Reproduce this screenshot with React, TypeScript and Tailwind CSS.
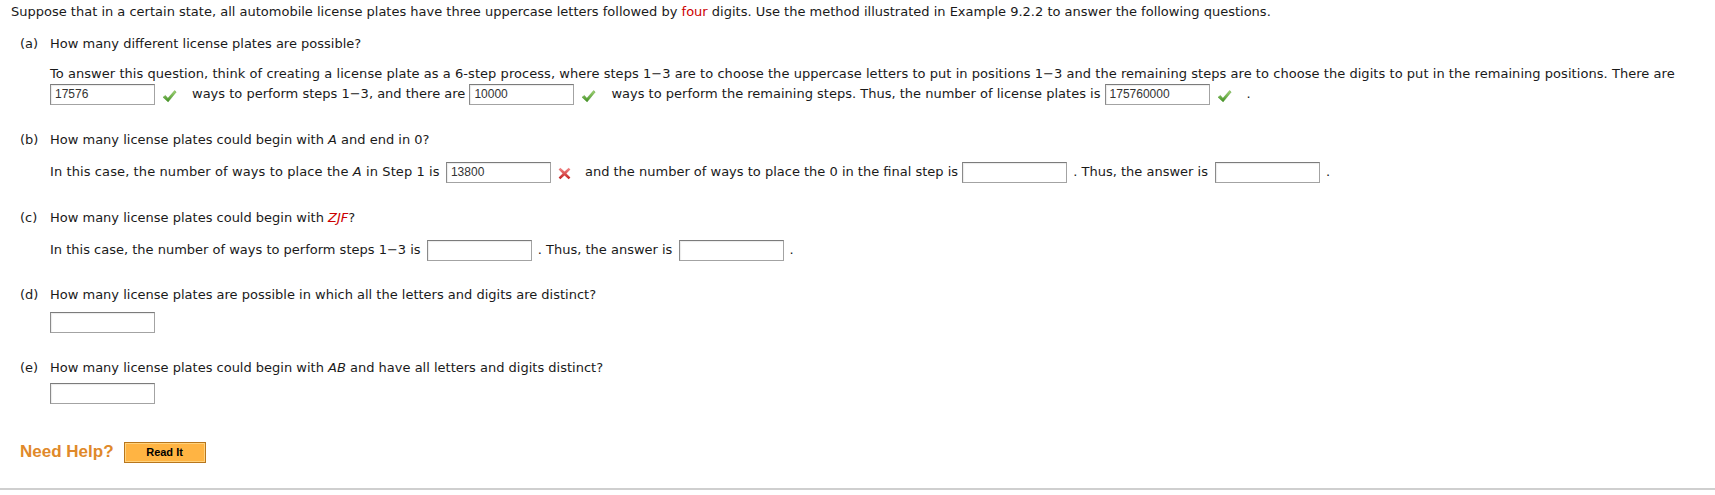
import React from "react";

const Box = ({ value }: { value?: string }) => (
  <span className="inline-block align-middle shrink-0 w-[105px] h-[21px] border border-[#a3a3a3] border-t-[#7b7b7b] border-l-[#8a8a8a] bg-white pl-[4px] text-[12px] leading-[19px] text-[#333] [font-family:'Liberation_Sans',Arial,sans-serif] shadow-[inset_1px_1px_1px_rgba(0,0,0,0.08)]">
    {value}
  </span>
);

const Check = () => (
  <svg width="15" height="14" viewBox="0 0 15 14" className="inline-block align-middle shrink-0 ml-[7px] mr-[15px] mt-[3px]">
    <defs>
      <linearGradient id="cg" x1="0" y1="0" x2="0" y2="1">
        <stop offset="0" stopColor="#a6d877" />
        <stop offset="1" stopColor="#3f8f22" />
      </linearGradient>
    </defs>
    <path d="M1 8.2 L3.4 6.4 L5.9 9.2 L12.6 1.6 L14.2 3 L6.1 13 Z" fill="url(#cg)" stroke="#4a8f2a" strokeWidth="0.4" />
  </svg>
);

const Cross = () => (
  <svg width="13" height="13" viewBox="0 0 13 13" className="inline-block align-middle shrink-0 ml-[7px] mr-[14px] mt-[3px]">
    <defs>
      <linearGradient id="xg" x1="0" y1="0" x2="0" y2="1">
        <stop offset="0" stopColor="#f28a8a" />
        <stop offset="1" stopColor="#c41f1f" />
      </linearGradient>
    </defs>
    <path d="M2.3 0.8 L6.5 4.4 L10.7 0.8 L12.4 2.6 L8.4 6.5 L12.4 10.4 L10.7 12.2 L6.5 8.6 L2.3 12.2 L0.6 10.4 L4.6 6.5 L0.6 2.6 Z" fill="url(#xg)" />
  </svg>
);

const Head = ({ label, children, mt }: { label: string; children: React.ReactNode; mt: string }) => (
  <div className={`flex pl-[9px] h-[20px] leading-[20px] whitespace-nowrap ${mt}`}>
    <span className="w-[30px]">{label}</span>
    <span>{children}</span>
  </div>
);

export default function App() {
  return (
    <div className="w-[1715px] h-[495px] bg-white text-[#1a1a1a] text-[13px] [font-family:'DejaVu_Sans',Verdana,sans-serif] overflow-hidden">
      <div className="pl-[11px] pt-[2px]">
        <div className="h-[20px] leading-[20px] whitespace-nowrap">
          Suppose that in a certain state, all automobile license plates have three uppercase letters followed by{" "}
          <span className="text-[#cc0000]">four</span> digits. Use the method illustrated in Example 9.2.2 to answer the following questions.
        </div>

        <Head label="(a)" mt="mt-[12px]">How many different license plates are possible?</Head>
        <div className="pl-[39px] mt-[10px] leading-[20px] whitespace-nowrap">
          <div className="h-[20px] tracking-[0.05px]">
            To answer this question, think of creating a license plate as a 6-step process, where steps 1−3 are to choose the uppercase letters to put in positions 1−3 and the remaining steps are to choose the digits to put in the remaining positions. There are
          </div>
          <div className="h-[20px] flex items-center">
            <Box value="17576" />
            <Check />
            <span>ways to perform steps 1−3, and there are&nbsp;</span>
            <Box value="10000" />
            <Check />
            <span>ways to perform the remaining steps. Thus, the number of license plates is&nbsp;</span>
            <Box value="175760000" />
            <Check />
            <span>.</span>
          </div>
        </div>

        <Head label="(b)" mt="mt-[26px]">
          How many license plates could begin with <i>A</i> and end in 0?
        </Head>
        <div className="pl-[39px] mt-[12px] h-[20px] flex items-center whitespace-nowrap">
          <span className="tracking-[0.1px] mr-[2px]">
            In this case, the number of ways to place the <i>A</i> in Step 1 is&nbsp;
          </span>
          <Box value="13800" />
          <Cross />
          <span>and the number of ways to place the 0 in the final step is&nbsp;</span>
          <Box />
          <span className="ml-[6px] mr-[3px]">. Thus, the answer is&nbsp;</span>
          <Box />
          <span className="ml-[6px]">.</span>
        </div>

        <Head label="(c)" mt="mt-[26px]">
          How many license plates could begin with <i className="text-[#cc0000]">ZJF</i>?
        </Head>
        <div className="pl-[39px] mt-[12px] h-[20px] flex items-center whitespace-nowrap">
          <span className="mr-[2px]">In this case, the number of ways to perform steps 1−3 is&nbsp;</span>
          <Box />
          <span className="ml-[6px] mr-[2px]">. Thus, the answer is&nbsp;</span>
          <Box />
          <span className="ml-[6px]">.</span>
        </div>

        <Head label="(d)" mt="mt-[25px]">How many license plates are possible in which all the letters and digits are distinct?</Head>
        <div className="pl-[39px] mt-[7px] h-[20px] flex items-center">
          <Box />
        </div>

        <Head label="(e)" mt="mt-[26px]">
          How many license plates could begin with <i>AB</i> and have all letters and digits distinct?
        </Head>
        <div className="pl-[39px] mt-[5px] h-[20px] flex items-center">
          <Box />
        </div>

        <div className="mt-[38px] pl-[9px] h-[22px] flex items-center [font-family:'Liberation_Sans',Arial,sans-serif]">
          <span className="text-[17px] font-bold text-[#e0892a]">Need Help?</span>
          <span className="ml-[10px] inline-flex items-center justify-center w-[82px] h-[21px] bg-[#ffb443] border border-[#b8761c] shadow-[inset_0_0_0_1px_#ffd27d]">
            <span className="text-[11px] font-bold text-black">Read It</span>
          </span>
        </div>
      </div>
      <div className="mt-[25px] h-[2px] bg-[#cfcfcf]" />
    </div>
  );
}
